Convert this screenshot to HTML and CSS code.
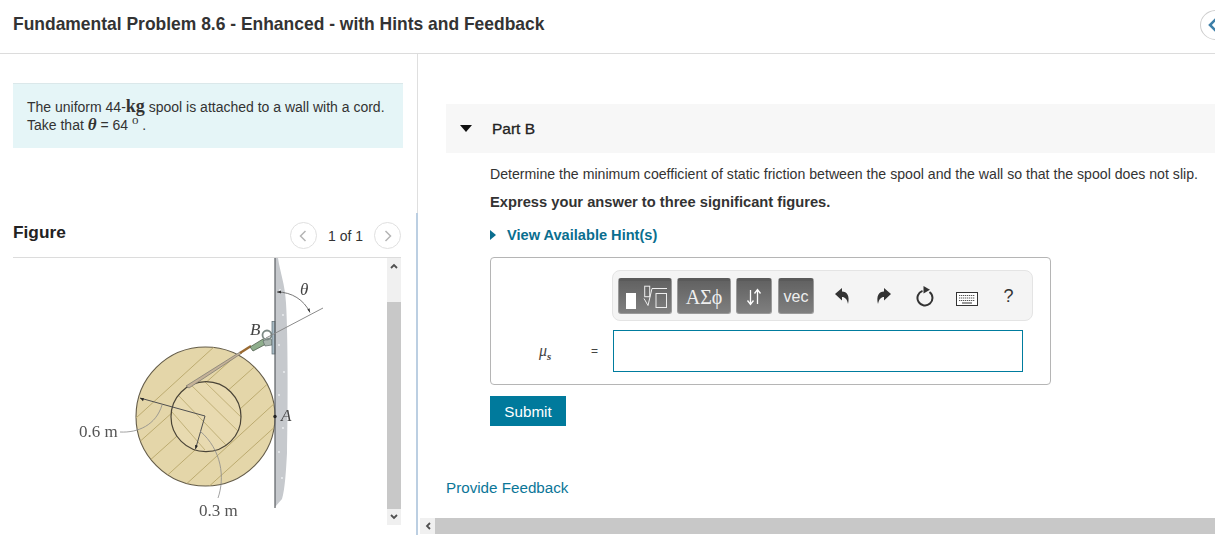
FILE: index.html
```html
<!DOCTYPE html>
<html lang="en">
<head>
<meta charset="utf-8">
<title>Fundamental Problem 8.6</title>
<link rel="stylesheet" href="styles.css">
</head>
<body>
<header class="top">
  <h1 class="title">Fundamental Problem 8.6 - Enhanced - with Hints and Feedback</h1>
  <button class="collapse" aria-label="Collapse">
    <svg width="12" height="16" viewBox="0 0 12 16"><path d="M9 2 3 8l6 6" fill="none" stroke="#3d7fa8" stroke-width="2.600"/></svg>
  </button>
</header>
<main class="main">
  <aside class="left">
    <div class="intro">
      <p>The uniform 44-<b class="unit">kg</b> spool is attached to a wall with a cord.</p>
      <p>Take that <i class="theta">θ</i> = 64 <sup class="deg">o</sup> .</p>
    </div>
    <div class="fig-head">
      <h2 class="fig-title">Figure</h2>
      <div class="pager">
        <span class="pg-btn"><svg width="10" height="14" viewBox="0 0 10 14"><path d="M7.500 2 2.500 7l5 5" fill="none" stroke="#b5b5b5" stroke-width="1.500"/></svg></span>
        <span class="pg-text">1 of 1</span>
        <span class="pg-btn"><svg width="10" height="14" viewBox="0 0 10 14"><path d="M2.500 2l5 5-5 5" fill="none" stroke="#b5b5b5" stroke-width="1.500"/></svg></span>
      </div>
    </div>
    <div class="fig-body">
      <svg class="spool" width="374" height="277" viewBox="13 258 374 277">
        <defs>
          <clipPath id="ring"><circle cx="205.500" cy="416.500" r="69.500"/></clipPath>
          <clipPath id="core"><circle cx="206" cy="416.700" r="35"/></clipPath>
        </defs>
        <path d="M275 258h3c2 14 7 26 8 45 2 30 2 110 1 150-1 18-2 36-5 46l-7 8z" fill="#c6c9cd"/>
        <g fill="#eef0f2"><circle cx="280" cy="290" r=".9"/><circle cx="283" cy="315" r=".9"/><circle cx="279" cy="345" r=".9"/><circle cx="284" cy="372" r=".9"/><circle cx="279" cy="395" r=".9"/><circle cx="283" cy="428" r=".9"/><circle cx="279" cy="452" r=".9"/><circle cx="282" cy="478" r=".9"/></g>
        <circle cx="205.500" cy="416.500" r="69.500" fill="#e4d6a9" stroke="#645c48" stroke-width="1.100"/>
        <g clip-path="url(#ring)" stroke="#bcab70" stroke-width="1" fill="none">
          <path d="M136 418 215 346M136 445 240 352M148 462 262 360M160 482 274 378M182 488 276 402M205 490 278 424"/>
        </g>
        <circle cx="206" cy="416.700" r="35" fill="#e8dab0"/>
        <g clip-path="url(#core)" stroke="#c0b078" stroke-width="1" fill="none">
          <path d="M186 380 245 438M178 395 226 445M172 412 205 450M205 382 244 420"/>
        </g>
        <circle cx="206" cy="416.700" r="35" fill="none" stroke="#4a4437" stroke-width="1.200"/>
        <path d="M186 386 240 352l2 1-53 35z" fill="#c4b198" stroke="#77766f" stroke-width=".7"/>
        <path d="M240 353 251 346" stroke="#9a6a32" stroke-width="2.400"/>
        <path d="M250 347 263 339l3 5-13 7z" fill="#8fae8c" stroke="#4f5d4e" stroke-width=".8"/>
        <path d="M263 341 269 338 272 340 272 345 265 346z" fill="#a9b5ae" stroke="#5d6a66" stroke-width=".7"/>
        <circle cx="267" cy="335" r="4.500" fill="none" stroke="#7d8a86" stroke-width="1.800"/>
        <rect x="272" y="321.500" width="3" height="32.500" fill="#a9bcc6" stroke="#5c6a70" stroke-width=".7"/>
        <path d="M275 258V508" stroke="#5b5f63" stroke-width="1.200"/>
        <path d="M323 308 266 338" stroke="#8b8b8b" stroke-width="1"/>
        <path d="M277 292C292 292 304 300 310 312.500" fill="none" stroke="#555" stroke-width=".8"/>
        <path d="M277 292l4-1.600v3.200zM310 312.500l-2.600-3 2.200-1.200z" fill="#333"/>
        <circle cx="275" cy="416.500" r="1.700" fill="#222"/>
        <path d="M140 398 205 416 195.500 449" fill="none" stroke="#4f4f4f" stroke-width="1"/>
        <path d="M140 398l4 .2-1 3zM195.500 449l-.5-4 3 .8z" fill="#222"/>
        <path d="M120 432C138 433 156 425 162 405" fill="none" stroke="#8a8a8a" stroke-width=".8"/>
        <path d="M218 498C225 478 222 450 200 431" fill="none" stroke="#8a8a8a" stroke-width=".8"/>
        <g class="fig-label">
          <text x="79" y="437">0.6 m</text>
          <text x="199" y="516">0.3 m</text>
          <text class="fig-it" x="250" y="335">B</text>
          <text class="fig-it" x="281" y="421">A</text>
          <text class="fig-it" x="300" y="295">θ</text>
        </g>
      </svg>
      <div class="vbar">
        <span class="bar-cap"><svg width="8" height="6" viewBox="0 0 8 6"><path d="M1 5 4 2l3 3" fill="none" stroke="#505050" stroke-width="1.800"/></svg></span>
        <span class="vthumb"></span>
        <span class="bar-end"><svg width="8" height="6" viewBox="0 0 8 6"><path d="M1 1l3 3 3-3" fill="none" stroke="#505050" stroke-width="1.800"/></svg></span>
      </div>
    </div>
  </aside>
  <section class="right">
    <div class="content">
      <div class="part-head">
        <span class="caret-down"></span>
        <h2 class="part-title">Part B</h2>
      </div>
      <div class="part-body">
        <p class="question">Determine the minimum coefficient of static friction between the spool and the wall so that the spool does not slip.</p>
        <p class="express">Express your answer to three significant figures.</p>
        <p class="hint"><span class="caret-right"></span>View Available Hint(s)</p>
        <div class="answer">
          <div class="toolbar">
            <span class="tb-btn tb-wide"><span class="sq-solid"></span><svg width="31" height="26" viewBox="0 0 31 26"><path d="M8 14.500 12 21.500 16 4.500H31" fill="none" stroke="#eee" stroke-width="1"/><rect x="8.700" y="2.200" width="5" height="10.500" fill="none" stroke="#eee"/><rect x="20" y="9.500" width="10.500" height="14" fill="none" stroke="#eee"/></svg></span>
            <span class="tb-btn tb-wide tb-greek">ΑΣϕ</span>
            <span class="tb-btn"><svg width="18" height="20" viewBox="0 0 18 20"><path d="M5.500 3v14M2.500 13.500l3 4 3-4M12.500 17V3M9.500 6.500l3-4 3 4" fill="none" stroke="#fff" stroke-width="1.300"/></svg></span>
            <span class="tb-btn tb-vec">vec</span>
            <div class="tools">
              <span class="tool"><svg width="16" height="18" viewBox="0 0 16 18"><path d="M1 7 8 1V4.500C13 4.500 16 9 14 17 13 12 11 10 8 10V13.500z" fill="#333"/></svg></span>
              <span class="tool"><svg width="16" height="18" viewBox="0 0 16 18"><path d="M15 7 8 1V4.500C3 4.500 0 9 2 17 3 12 5 10 8 10V13.500z" fill="#333"/></svg></span>
              <span class="tool"><svg width="20" height="22" viewBox="0 0 20 22"><path d="M7.500 5.900A7.500 7.500 0 1 0 14.500 7" fill="none" stroke="#333" stroke-width="2"/><path d="M8.500 1 15 4.800 8.500 8.500z" fill="#333"/></svg></span>
              <span class="tool tool-kb"><svg width="22" height="14" viewBox="0 0 22 14"><rect x=".5" y=".5" width="21" height="13" fill="#fff" stroke="#333"/><path d="M3 3.500h16M3 6h16M3 8.500h16" stroke="#555" stroke-width="1.200" stroke-dasharray="1.300 .7"/><path d="M6 11h10" stroke="#555" stroke-width="1.200"/></svg></span>
              <span class="tool tool-q">?</span>
            </div>
          </div>
          <div class="eq-row">
            <span class="mu"><i>μ</i><sub class="mu-sub"><i>s</i></sub></span>
            <span class="eq">=</span>
            <input class="field" type="text" aria-label="answer">
          </div>
        </div>
        <button class="submit">Submit</button>
      </div>
      <a class="feedback" href="#">Provide Feedback</a>
    </div>
    <div class="hbar">
      <span class="hcap"><svg width="6" height="8" viewBox="0 0 6 8"><path d="M5 1 2 4l3 3" fill="none" stroke="#505050" stroke-width="1.800"/></svg></span>
      <span class="hthumb"></span>
    </div>
  </section>
</main>
</body>
</html>
```
FILE: styles.css
```css
* { box-sizing: border-box; }
html, body { margin: 0; padding: 0; }
body {
  width: 1215px;
  height: 535px;
  overflow: hidden;
  background: #fff;
  color: #333;
  font-family: "Liberation Sans", Arial, sans-serif;
  display: flex;
  flex-direction: column;
}
p, h1, h2 { margin: 0; }

.top {
  height: 54px;
  flex: none;
  border-bottom: 1px solid #dcdcdc;
  display: flex;
  align-items: flex-start;
  justify-content: space-between;
  padding: 14px 0 0 13px;
}
.title { font-size: 17.470px; line-height: 20px; font-weight: 700; color: #333; white-space: nowrap; }
.collapse {
  width: 32px;
  height: 30px;
  margin: -4px -17px 0 0;
  padding: 0 0 0 6px;
  border: 1px solid #cfcfcf;
  border-radius: 50%;
  background: #fff;
  display: flex;
  align-items: center;
  justify-content: flex-start;
}

.main { flex: 1; display: flex; min-height: 0; }

.left {
  width: 418px;
  flex: none;
  padding: 29px 14px 0 13px;
  border-right: 1px solid #dfdfdf;
  position: relative;
}
.left::after {
  content: "";
  position: absolute;
  right: -1px;
  top: 159px;
  bottom: 0;
  width: 2px;
  background: #bccfe2;
}
.intro {
  height: 65px;
  background: #e5f5f7;
  border-top: 1px solid #dbe8ea;
  padding: 14px 0 0 14px;
  font-size: 14px;
  line-height: 18px;
  color: #333;
  white-space: nowrap;
}
.unit { font-family: "Liberation Serif", serif; font-size: 18px; line-height: 0; }
.theta { font-family: "Liberation Serif", serif; font-weight: 700; font-size: 17px; line-height: 0; }
.deg { font-family: "Liberation Serif", serif; font-size: 13px; line-height: 0; }

.fig-head {
  height: 41px;
  margin-top: 68px;
  margin-right: 2px;
  padding-top: 6px;
  display: flex;
  align-items: flex-start;
  justify-content: space-between;
}
.fig-title { font-size: 17.300px; line-height: 20px; font-weight: 700; color: #222; }
.pager { display: flex; align-items: center; gap: 11px; }
.pg-btn {
  width: 27px;
  height: 27px;
  border: 1px solid #e0e0e0;
  border-radius: 50%;
  display: flex;
  align-items: center;
  justify-content: center;
}
.pg-text { font-size: 14px; color: #333; margin: 0 0 -1px 0; }

.fig-body {
  width: 388px;
  height: 277px;
  border-top: 1px solid #dcdcdc;
  display: flex;
  align-items: flex-start;
}
.spool { flex: none; display: block; filter: blur(.3px); }
.fig-label text { font-family: "Liberation Serif", serif; font-size: 17px; fill: #555; }
.fig-label .fig-it { font-style: italic; fill: #444; font-size: 17px; }
.vbar {
  width: 14px;
  height: 267px;
  flex: none;
  background: #f0f0f0;
  display: flex;
  flex-direction: column;
}
.bar-cap { height: 16px; display: flex; align-items: center; justify-content: center; }
.vthumb { height: 207px; margin-top: 28px; background: #c8c8c8; flex: none; }
.bar-end { flex: 1; display: flex; align-items: center; justify-content: center; }

.right { flex: 1; min-width: 0; display: flex; flex-direction: column; }
.content { flex: 1; padding: 50px 0 0 28px; min-height: 0; }
.part-head {
  height: 49px;
  background: #f7f7f7;
  display: flex;
  align-items: center;
  padding-left: 14px;
}
.caret-down {
  width: 0;
  height: 0;
  border-left: 6px solid transparent;
  border-right: 6px solid transparent;
  border-top: 7px solid #111;
}
.part-title { margin-left: 20px; font-size: 15.500px; font-weight: 400; color: #222; -webkit-text-stroke: .3px #222; }
.part-body { padding: 12px 0 0 44px; }
.question { font-size: 14.140px; line-height: 18px; color: #333; white-space: nowrap; }
.express { margin-top: 10px; font-size: 14.700px; line-height: 18px; font-weight: 700; color: #333; white-space: nowrap; }
.hint {
  margin-top: 15px;
  font-size: 14.600px;
  line-height: 18px;
  font-weight: 700;
  color: #0a6e8f;
  display: flex;
  align-items: center;
}
.caret-right {
  width: 0;
  height: 0;
  border-top: 5.500px solid transparent;
  border-bottom: 5.500px solid transparent;
  border-left: 6px solid #0a6e8f;
  margin-right: 11px;
}
.answer {
  width: 561px;
  height: 128px;
  margin-top: 13px;
  border: 1px solid #b5b5b5;
  border-radius: 4px;
  padding: 12px 0 0 121px;
}
.toolbar {
  width: 421px;
  height: 51px;
  background: #f4f4f4;
  border: 1px solid #e4e4e4;
  border-radius: 8px;
  padding: 7px 0 0 5px;
  display: flex;
  align-items: flex-start;
  gap: 5px;
}
.tb-btn {
  width: 36px;
  height: 36px;
  flex: none;
  border-radius: 3px;
  border: 1px solid #9a9a9a;
  border-top: 3px solid #5a5a5a;
  background: linear-gradient(#626262, #7f7f7f);
  color: #fff;
  display: flex;
  align-items: center;
  justify-content: center;
}
.tb-wide { width: 54px; }
.tb-greek { font-family: "Liberation Serif", serif; font-size: 20px; color: #eee; }
.tb-vec { font-size: 16px; color: #eee; margin-left: 1px; }
.sq-solid { width: 10px; height: 16px; background: #fff; margin: 7px 0 0 3px; }
.tools { display: flex; margin-left: 2px; }
.tool {
  width: 41.700px;
  height: 36px;
  display: flex;
  align-items: center;
  justify-content: center;
}
.tool-kb { padding-top: 5px; }
.tool-q { font-size: 18px; color: #333; }
.eq-row { display: flex; align-items: center; height: 42px; margin: 9px 0 0 -121px; }
.mu {
  width: 48px;
  margin-left: 48px;
  font-family: "Liberation Serif", serif;
  font-size: 16px;
  color: #444;
}
.mu-sub { font-size: 11px; line-height: 0; font-weight: 700; }
.eq { width: 22px; margin-left: 4px; font-size: 12px; color: #444; }
.field {
  width: 410px;
  height: 42px;
  border: 1px solid #007c9e;
  background: #fff;
  border-radius: 0;
  padding: 0;
  margin: 0;
}
.submit {
  display: block;
  width: 76px;
  height: 30px;
  margin-top: 11px;
  border: 0;
  border-radius: 0;
  background: #007a9c;
  color: #fff;
  font-family: inherit;
  font-size: 15.200px;
  padding: 0;
}
.feedback {
  display: block;
  margin-top: 53px;
  font-size: 15.200px;
  line-height: 18px;
  color: #0b7698;
  text-decoration: none;
}
.hbar {
  height: 16px;
  flex: none;
  margin: 0 0 1px 2px;
  display: flex;
}
.hcap {
  width: 15px;
  background: #f0f0f0;
  display: flex;
  align-items: center;
  justify-content: center;
}
.hthumb { flex: 1; background: #c8c8c8; }
```
